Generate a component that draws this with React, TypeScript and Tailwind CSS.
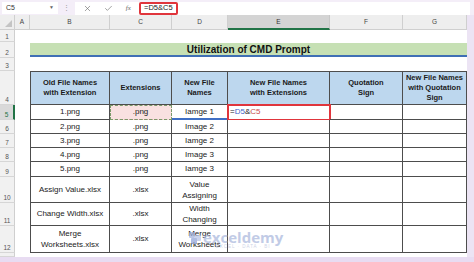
import React from "react";
import { X, Check } from "lucide-react";

const W = ["w-[80px]", "w-[62px]", "w-[56px]", "w-[102px]", "w-[73px]", "w-[64px]"];
const B = "border-[#4d4d4d]";

function RowHead({ n, active }: { n?: string; active?: boolean }) {
  return (
    <div
      className={`w-[15px] shrink-0 flex items-end justify-center pb-[1px] text-[6.5px] leading-none border-b border-[#d6d6d6] ${
        active ? "bg-[#d9d9d9] border-r-2 border-r-[#217346] text-[#217346]" : "bg-[#f1f1f1] border-r border-r-[#cfcfcf] text-[#555]"
      }`}
    >
      {n}
    </div>
  );
}

function Row({ h, n, active, children }: { h: string; n?: string; active?: boolean; children?: React.ReactNode }) {
  return (
    <div className={`flex ${h}`}>
      <RowHead n={n} active={active} />
      <div className="w-[15px] shrink-0 bg-white" />
      <div className="flex w-[437px] bg-white">{children}</div>
      <div className="w-[7px] shrink-0 bg-[#ece4f4]" />
    </div>
  );
}

function Cell({ i, children, top, cls = "" }: { i: number; children?: React.ReactNode; top?: boolean; cls?: string }) {
  return (
    <div
      className={`${W[i]} shrink-0 flex items-center justify-center text-center border-r border-b ${B} ${
        i === 0 ? "border-l" : ""
      } ${top ? "border-t" : ""} ${cls}`}
    >
      {children}
    </div>
  );
}

const data: [string, string, string, string][] = [
  ["h-[15px]", "5", "1.png", "Iamge 1"],
  ["h-[14px]", "6", "2.png", "Image 2"],
  ["h-[14px]", "7", "3.png", "Iamge 2"],
  ["h-[14px]", "8", "4.png", "Image 3"],
  ["h-[15px]", "9", "5.png", "Iamge 3"],
];

export default function App() {
  return (
    <div className="relative w-[474px] h-[262px] overflow-hidden bg-[#f4eef8] font-['Liberation_Sans',Arial,sans-serif] text-[#222]">
      {/* formula bar */}
      <div className="flex items-center h-[15px] pt-[1px]">
        <div className="ml-[2px] w-[56px] h-[12px] bg-white flex items-center justify-between px-[4px] text-[7px] text-[#333]">
          <span>C5</span>
          <span className="text-[5px] text-[#666]">▼</span>
        </div>
        <div className="w-[17px] flex justify-center text-[7px] text-[#999]">⋮</div>
        <div className="flex-1 h-[13px] bg-white flex items-center">
          <div className="w-[62px] flex items-center justify-around text-[#666] pl-[2px]">
            <X size={9} strokeWidth={1.6} />
            <Check size={9} strokeWidth={1.6} />
            <span className="text-[7px] italic font-['Liberation_Serif',serif]">fx</span>
          </div>
          <div className="ml-[2px] h-[13px] px-[3px] flex items-center border-2 border-[#e0353c] rounded-[2px] text-[7.5px] text-[#222]">
            =D5&amp;C5
          </div>
        </div>
        <div className="w-[4px]" />
      </div>

      {/* column header */}
      <div className="flex h-[15px] text-[6.5px] text-[#444]">
        <div className="w-[15px] bg-[#eeeeee] border-r border-b border-[#cfcfcf] relative">
          <div className="absolute right-[2px] bottom-[2px] w-0 h-0 border-l-[7px] border-l-transparent border-b-[7px] border-b-[#c4c4c4]" />
        </div>
        {[
          ["w-[15px]", "A"],
          ["w-[80px]", "B"],
          ["w-[62px]", "C"],
          ["w-[56px]", "D"],
          ["w-[102px]", "E"],
          ["w-[73px]", "F"],
          ["w-[64px]", "G"],
        ].map(([w, l]) =>
          l === "E" ? (
            <div key={l} className={`${w} flex items-center justify-center bg-[#d4d4d4] border-r border-[#c8c8c8] border-b-2 border-b-[#217346] text-[#333]`}>
              {l}
            </div>
          ) : (
            <div key={l} className={`${w} flex items-center justify-center bg-[#eeeeee] border-r border-b border-[#cfcfcf]`}>
              {l}
            </div>
          )
        )}
        <div className="w-[7px] bg-[#ece4f4]" />
      </div>

      <Row h="h-[12px]" n="1" />
      <Row h="h-[16px]" n="2">
        <div className="w-[437px] mt-[1px] h-[14px] bg-[#c6e0b4] border-b-2 border-[#3f6fb5] flex items-center justify-center text-[10px] font-bold text-[#111]">
          Utilization of CMD Prompt
        </div>
      </Row>
      <Row h="h-[13px]" n="3" />
      <Row h="h-[34px]" n="4">
        {[
          ["Old File Names", "with Extension"],
          ["Extensions"],
          ["New File", "Names"],
          ["New File Names", "with Extensions"],
          ["Quotation", "Sign"],
          ["New File Names", "with Quotation", "Sign"],
        ].map((lines, i) => (
          <Cell key={i} i={i} top cls="bg-[#bdd7ee] flex-col text-[7.5px] font-bold leading-[10px] text-[#1a1a1a]">
            {lines.map((l) => (
              <span key={l}>{l}</span>
            ))}
          </Cell>
        ))}
      </Row>

      {data.map(([h, n, a, d], r) => (
        <Row key={n} h={h} n={n} active={r === 0}>
          <Cell i={0} cls="text-[8px]">{a}</Cell>
          {r === 0 ? (
            <Cell i={1} cls="text-[8px] bg-[#f9e1e1] !border-[#b54a4a] border-dashed outline outline-1 outline-dashed outline-[#7a9a6a] -outline-offset-1">
              .png
            </Cell>
          ) : (
            <Cell i={1} cls="text-[8px]">.png</Cell>
          )}
          <Cell i={2} cls={`text-[8px] ${r === 0 ? "!border-b-[#3f6fc5] border-b-2" : ""}`}>{d}</Cell>
          {r === 0 ? (
            <Cell i={3} cls="!justify-start pl-[2px] text-[8px] outline outline-2 outline-[#e0353c] -outline-offset-1">
              <span>
                =<span className="text-[#3d63c9]">D5</span>&amp;<span className="text-[#c84a4a]">C5</span>
              </span>
            </Cell>
          ) : (
            <Cell i={3} />
          )}
          <Cell i={4} />
          <Cell i={5} />
        </Row>
      ))}

      <Row h="h-[26px]" n="10">
        <Cell i={0} cls="text-[8px]">Assign Value.xlsx</Cell>
        <Cell i={1} cls="text-[8px]">.xlsx</Cell>
        <Cell i={2} cls="flex-col text-[8px] leading-[11px]">
          <span>Value</span>
          <span>Assigning</span>
        </Cell>
        <Cell i={3} />
        <Cell i={4} />
        <Cell i={5} />
      </Row>
      <Row h="h-[23px]" n="11">
        <Cell i={0} cls="text-[8px]">Change Width.xlsx</Cell>
        <Cell i={1} cls="text-[8px]">.xlsx</Cell>
        <Cell i={2} cls="flex-col text-[8px] leading-[11px]">
          <span>Width</span>
          <span>Changing</span>
        </Cell>
        <Cell i={3} />
        <Cell i={4} />
        <Cell i={5} />
      </Row>
      <Row h="h-[27px]" n="12">
        <Cell i={0} cls="flex-col text-[8px] leading-[11px]">
          <span>Merge</span>
          <span>Worksheets.xlsx</span>
        </Cell>
        <Cell i={1} cls="text-[8px]">.xlsx</Cell>
        <Cell i={2} cls="flex-col text-[8px] leading-[11px]">
          <span>Merge</span>
          <span>Worksheets</span>
        </Cell>
        <Cell i={3} />
        <Cell i={4} />
        <Cell i={5} />
      </Row>
      <Row h="h-[4px]" />
      <div className="h-[5px] bg-[#e8dcf2]" />

      {/* watermark */}
      <div className="absolute left-[188px] top-[229px] flex items-start opacity-70 pointer-events-none">
        <svg width="14" height="14" viewBox="0 0 14 14" className="mt-[2px]">
          <rect x="1" y="1" width="6" height="6" rx="1" fill="#9fb0dc" />
          <rect x="7" y="4" width="6" height="6" rx="1" fill="#b6c3e6" />
          <rect x="3" y="7" width="6" height="6" rx="1" fill="#8ea2d6" />
        </svg>
        <div className="ml-[1px] flex flex-col items-center">
          <span className="text-[15px] font-bold leading-[16px] text-[#a8b6dc] font-['Open_Sans',sans-serif]">exceldemy</span>
          <span className="text-[4.5px] tracking-[1px] text-[#b9c3dd] leading-none">EXCEL · DATA · BI</span>
        </div>
      </div>
    </div>
  );
}
